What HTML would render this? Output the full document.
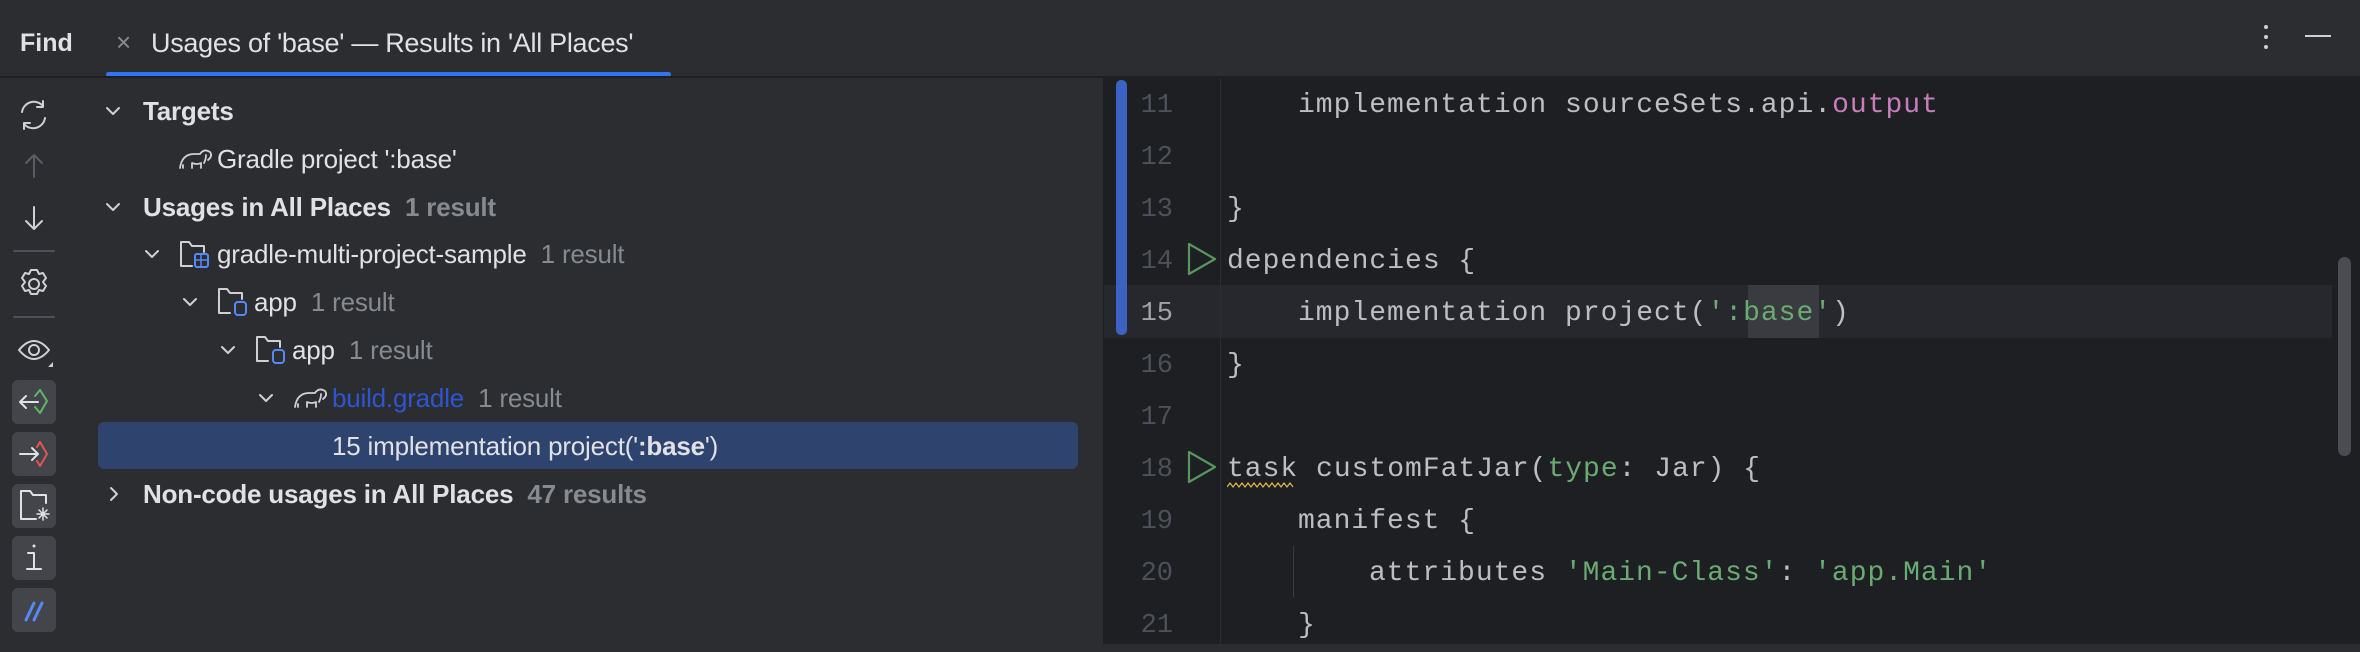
<!DOCTYPE html>
<html><head><meta charset="utf-8"><style>
*{margin:0;padding:0;box-sizing:border-box}
body{width:2360px;height:644px;background:#2b2d30;position:relative;overflow:hidden;font-family:"Liberation Sans",sans-serif;color:#dfe1e5}
.a{position:absolute;white-space:pre}
.t{font-size:26px;line-height:30px;letter-spacing:-0.2px}
.b{font-weight:bold}
.g{color:#868a91}
.code{font-family:"Liberation Mono",monospace;font-size:28px;letter-spacing:1px;color:#bcbec4;line-height:52px;height:52px}
.ln{font-family:"Liberation Mono",monospace;font-size:27px;color:#4b5059;width:40px;text-align:right;line-height:52px}
.btn{position:absolute;left:12px;width:44px;height:44px;background:#43454a;border-radius:6px}
.str{color:#6aab73}
</style></head><body>
<!-- header -->
<div class="a b" style="left:20px;top:28px;font-size:25px;line-height:30px">Find</div>
<div class="a" style="left:116px;top:27px;font-size:26px;color:#868a91;line-height:30px">×</div>
<div class="a" style="left:151px;top:28px;font-size:27px;line-height:30px;letter-spacing:-0.3px">Usages of 'base' — Results in 'All Places'</div>
<div class="a" style="left:106px;top:72px;width:565px;height:5px;background:#3574f0;border-radius:3px"></div>
<div class="a" style="left:0;top:76px;width:2360px;height:2px;background:#1e1f22"></div>
<svg class="a" style="left:2258px;top:22px" width="16" height="30"><circle cx="8" cy="5" r="2" fill="#ced0d6"/><circle cx="8" cy="15" r="2" fill="#ced0d6"/><circle cx="8" cy="25" r="2" fill="#ced0d6"/></svg>
<div class="a" style="left:2305px;top:35px;width:26px;height:2px;background:#ced0d6"></div>

<!-- left toolbar -->
<svg class="a" style="left:0;top:78px" width="70" height="566" fill="none" stroke-linecap="round" stroke-linejoin="round">
 <g stroke="#ced0d6" stroke-width="2">
  <path d="M22 34 a12 12 0 0 1 21 -6 M45 40 a12 12 0 0 1 -21 6"/><path d="M43 23 v6 h-6 M24 51 v-6 h6"/>
 </g>
 <path d="M34 77 v22 M26 85 l8 -8 8 8" stroke="#5a5d63" stroke-width="2"/>
 <path d="M34 129 v22 M26 143 l8 8 8 -8" stroke="#ced0d6" stroke-width="2"/>
 <path d="M14 173 h40 M14 239 h40" stroke="#4e5157" stroke-width="2"/>
 <g stroke="#ced0d6" stroke-width="2">
  <path d="M31 192 h6 l2 4 4 -1 3 5 -3 4 3 4 -3 5 -4 -1 -2 4 h-6 l-2 -4 -4 1 -3 -5 3 -4 -3 -4 3 -5 4 1z"/>
  <circle cx="34" cy="206" r="5"/>
 </g>
 <g stroke="#ced0d6" stroke-width="2"><path d="M19 272 q15 -18 30 0 q-15 18 -30 0z"/><circle cx="34" cy="272" r="5"/></g>
 <path d="M48 289 l5 -5 v5z" fill="#ced0d6"/>
</svg>
<div class="btn" style="top:380px"></div>
<div class="btn" style="top:432px"></div>
<div class="btn" style="top:484px"></div>
<div class="btn" style="top:536px"></div>
<div class="btn" style="top:588px"></div>
<svg class="a" style="left:0;top:0" width="70" height="644" fill="none" stroke-linecap="round" stroke-linejoin="round" stroke-width="2">
 <path d="M38 402 h-18 M26 396 l-6 6 6 6" stroke="#dfe1e5"/><path d="M40 390 l7 11 -7 12 -5 -6" stroke="#5fb865"/><path d="M35 396 l5 -6" stroke="#5fb865"/>
 <path d="M20 454 h18 M32 448 l6 6 -6 6" stroke="#dfe1e5"/><path d="M40 442 l7 12 -7 12 M40 442 l-3 5 M40 466 l-3 -5" stroke="#e05555"/>
 <path d="M21 491 h9 l3 4 h13 v8 M36 519 h-15 v-28" stroke="#dfe1e5"/><path d="M43 508 v12 M37 514 h12 M39 510 l8 8 M47 510 l-8 8" stroke="#dfe1e5" stroke-width="1.5"/>
 <circle cx="34" cy="546" r="1.5" fill="#dfe1e5" stroke="none"/><path d="M28 553 h6 v16 M27 569 h14" stroke="#dfe1e5"/>
 <path d="M26 620 l8 -17 M34 620 l8 -17" stroke="#548af7" stroke-width="3"/>
</svg>

<!-- tree -->
<svg class="a" style="left:0;top:0" width="1100" height="644" fill="none" stroke="#ced0d6" stroke-width="2" stroke-linecap="round" stroke-linejoin="round">
 <path d="M107 108 l6 6 6 -6 M107 204 l6 6 6 -6 M146 251 l6 6 6 -6 M184 299 l6 6 6 -6 M222 347 l6 6 6 -6 M260 395 l6 6 6 -6"/>
 <path d="M111 488 l6 6 -6 6"/>
 <path d="M192 266 h-11 v-24 h8 l3 4 h12 v6"/>
 <rect x="195" y="254" width="13" height="13" rx="2" stroke="#548af7"/><path d="M201 254 v13 M195 260 h13" stroke="#548af7" stroke-width="1.5"/>
 <path d="M230 313 h-11 v-24 h8 l3 4 h12 v6" /><rect x="235" y="302" width="11" height="13" rx="3" stroke="#548af7"/>
 <path d="M268 361 h-11 v-24 h8 l3 4 h12 v6" /><rect x="273" y="350" width="11" height="13" rx="3" stroke="#548af7"/>
 <path d="M180 168 q2 -14 14 -14 h6 q4 -6 10 -2 q3 4 -2 8 M183 168 v-3 M192 168 v-5 q5 2 9 0 v5 M204 163 q2 -4 2 -8" stroke-width="1.8"/>
 <path d="M295 407 q2 -14 14 -14 h6 q4 -6 10 -2 q3 4 -2 8 M298 407 v-3 M307 407 v-5 q5 2 9 0 v5 M319 402 q2 -4 2 -8" stroke-width="1.8"/>
</svg>
<div class="a t b" style="left:143px;top:96px">Targets</div>
<div class="a t" style="left:217px;top:144px">Gradle project ':base'</div>
<div class="a t b" style="left:143px;top:192px">Usages in All Places  <span class="g">1 result</span></div>
<div class="a t" style="left:217px;top:239px">gradle-multi-project-sample  <span class="g">1 result</span></div>
<div class="a t" style="left:254px;top:287px">app  <span class="g">1 result</span></div>
<div class="a t" style="left:292px;top:335px">app  <span class="g">1 result</span></div>
<div class="a t" style="left:332px;top:383px"><span style="color:#2e55d0">build.gradle</span>  <span class="g">1 result</span></div>
<div class="a" style="left:98px;top:422px;width:980px;height:47px;background:#2e436e;border-radius:6px"></div>
<div class="a t" style="left:332px;top:431px">15 implementation project('<b>:base</b>')</div>
<div class="a t b" style="left:143px;top:479px">Non-code usages in All Places  <span class="g">47 results</span></div>

<!-- editor -->
<div class="a" style="left:1103px;top:78px;width:1257px;height:566px;background:#1e1f22"></div>
<div class="a" style="left:1104px;top:285px;width:1228px;height:53px;background:#26282e"></div>
<div class="a" style="left:1116px;top:80px;width:11px;height:255px;background:#3d62c2;border-radius:5px"></div>
<div class="a" style="left:1220px;top:78px;width:1px;height:566px;background:#2b2d30"></div>
<div class="a" style="left:2338px;top:257px;width:13px;height:199px;background:#4a4c51;border-radius:7px"></div>
<div class="a" style="left:1748px;top:285px;width:71px;height:53px;background:#393b40"></div>
<div class="a" style="left:1293px;top:546px;width:1px;height:51px;background:#393b40"></div>

<div class="a ln" style="left:1133px;top:80px">11</div>
<div class="a ln" style="left:1133px;top:132px">12</div>
<div class="a ln" style="left:1133px;top:184px">13</div>
<div class="a ln" style="left:1133px;top:236px">14</div>
<div class="a ln" style="left:1133px;top:288px;color:#a1a3ab">15</div>
<div class="a ln" style="left:1133px;top:340px">16</div>
<div class="a ln" style="left:1133px;top:392px">17</div>
<div class="a ln" style="left:1133px;top:444px">18</div>
<div class="a ln" style="left:1133px;top:496px">19</div>
<div class="a ln" style="left:1133px;top:548px">20</div>
<div class="a ln" style="left:1133px;top:600px">21</div>

<svg class="a" style="left:1186px;top:240px" width="34" height="250" fill="none" stroke-width="2.2" stroke-linejoin="round">
 <path d="M3 4 l26 15 -26 15z" stroke="#57965c"/><path d="M3 212 l26 15 -26 15z" stroke="#57965c"/>
</svg>

<div class="a code" style="left:1298px;top:80px">implementation sourceSets.api.<span style="color:#c77dbb">output</span></div>
<div class="a code" style="left:1227px;top:184px">}</div>
<div class="a code" style="left:1227px;top:236px">dependencies {</div>
<div class="a code" style="left:1298px;top:288px">implementation project(<span class="str">':base'</span>)</div>
<div class="a code" style="left:1227px;top:340px">}</div>
<div class="a code" style="left:1227px;top:444px">task customFatJar(<span class="str">type</span>: Jar) {</div>
<svg class="a" style="left:1227px;top:482px" width="72" height="6"><path d="M0 5 l3 -4 3 4 3 -4 3 4 3 -4 3 4 3 -4 3 4 3 -4 3 4 3 -4 3 4 3 -4 3 4 3 -4 3 4 3 -4 3 4 3 -4 3 4 3 -4 3 4" fill="none" stroke="#e0b94a" stroke-width="1.2"/></svg>
<div class="a code" style="left:1298px;top:496px">manifest {</div>
<div class="a code" style="left:1369px;top:548px">attributes <span class="str">'Main-Class'</span>: <span class="str">'app.Main'</span></div>
<div class="a code" style="left:1298px;top:600px">}</div>
</body></html>
